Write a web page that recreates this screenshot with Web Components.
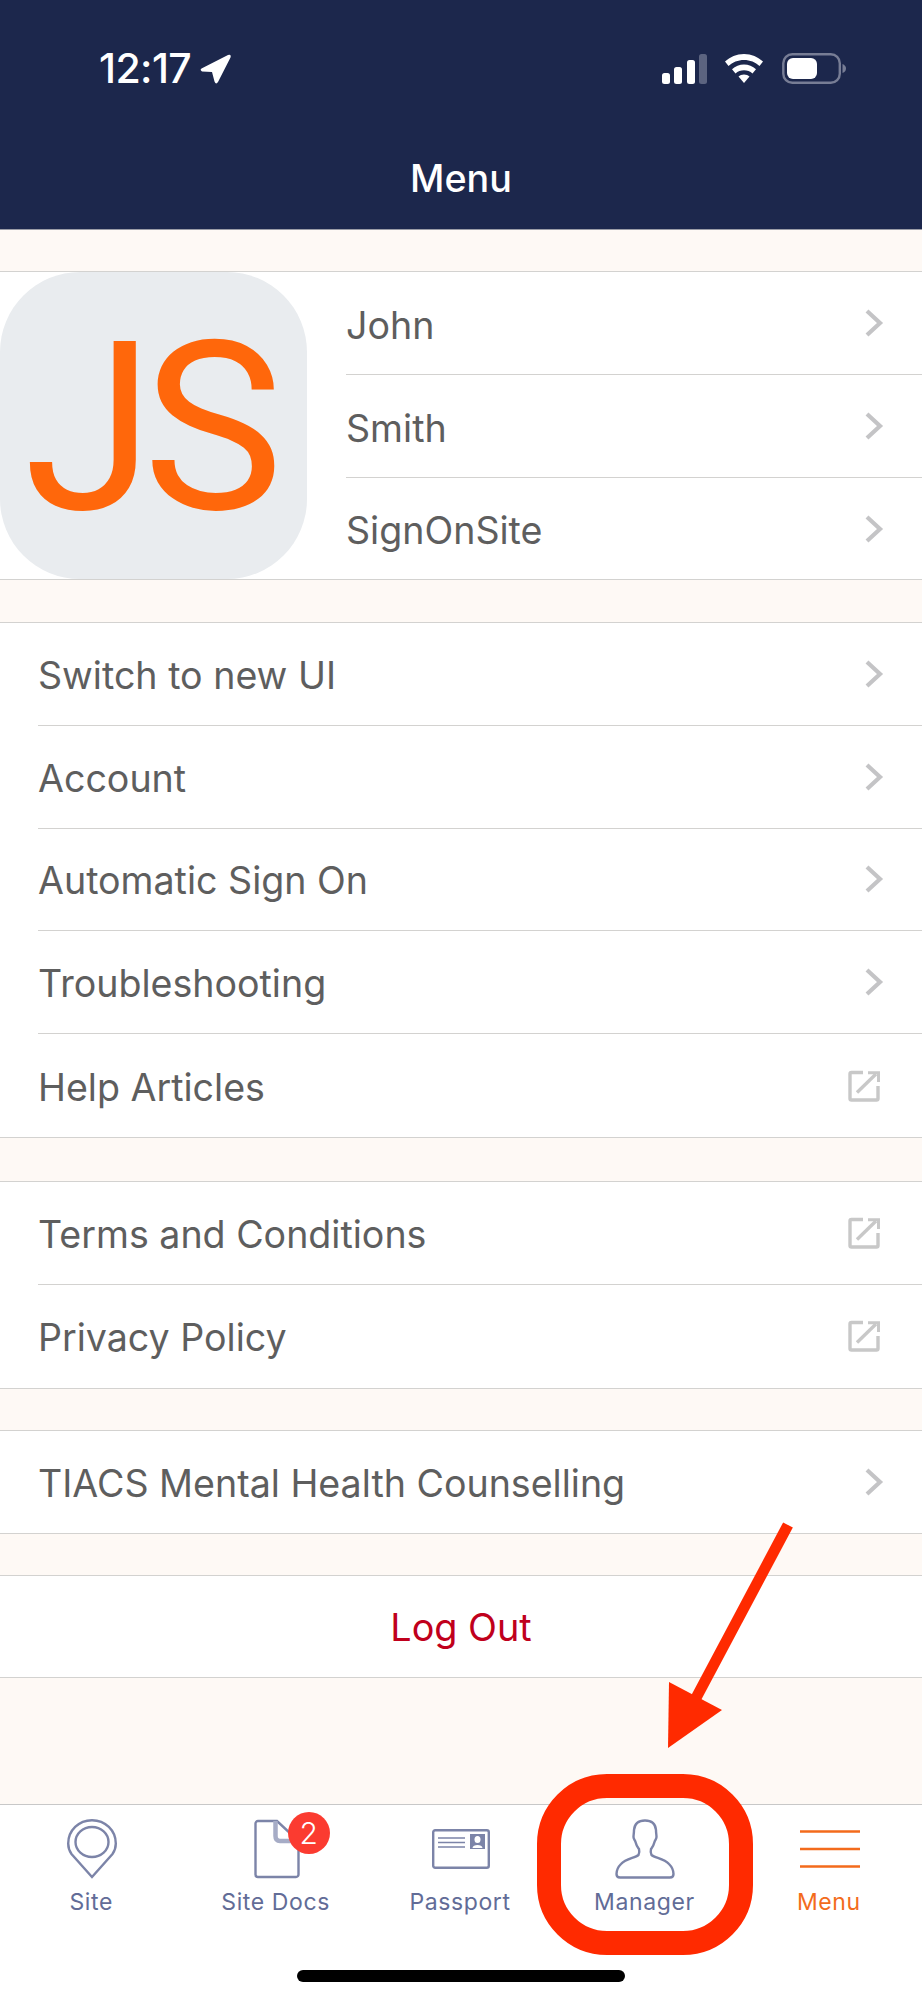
<!DOCTYPE html>
<html>
<head>
<meta charset="utf-8">
<style>
html, body { margin: 0; padding: 0; background: #fef9f5; }
body { font-family: Inter, "Liberation Sans", sans-serif; }
</style>
</head>
<body>
<app-screen>
  <status-header></status-header>
  <menu-group style="--gap: 41px">
    <profile-block></profile-block>
  </menu-group>
  <menu-group style="--gap: 42px">
    <menu-row>Switch to new UI</menu-row>
    <menu-row>Account</menu-row>
    <menu-row>Automatic Sign On</menu-row>
    <menu-row>Troubleshooting</menu-row>
    <menu-row external last>Help Articles</menu-row>
  </menu-group>
  <menu-group style="--gap: 43px">
    <menu-row external>Terms and Conditions</menu-row>
    <menu-row external last>Privacy Policy</menu-row>
  </menu-group>
  <menu-group>
    <menu-row last>TIACS Mental Health Counselling</menu-row>
  </menu-group>
  <menu-group>
    <logout-row>Log Out</logout-row>
  </menu-group>
  <tab-bar></tab-bar>
  <red-callout></red-callout>
</app-screen>

<script>
const CHEVRON = `<svg width="20" height="30" viewBox="0 0 20 30"><path d="M3 3 L16 15 L3 27" fill="none" stroke="#c4c4c6" stroke-width="4.200"/></svg>`;
const EXTERNAL = `<svg width="32" height="32" viewBox="0 0 32 32" fill="none" stroke="#c8c8c8" stroke-width="3.400"><path d="M15 2.500H3.500a1.500 1.500 0 0 0-1.500 1.500V28.500a1.500 1.500 0 0 0 1.500 1.500H28.500a1.500 1.500 0 0 0 1.500-1.500V16"/><path d="M9 22.500L28 4"/><path d="M20 2.800H30.500V12" stroke-width="3"/></svg>`;

class AppScreen extends HTMLElement {
    constructor() {
        super();
        this.attachShadow({mode: "open"}).innerHTML = `
        <style>
        :host { display: block; position: relative; width: 922px; height: 2000px; overflow: hidden; background: #fef9f5; }
        </style>
        <slot></slot>`;
    }
}

class StatusHeader extends HTMLElement {
    constructor() {
        super();
        this.attachShadow({mode: "open"}).innerHTML = `
        <style>
        :host { display: block; background: #1c274c; color: #fff; height: 229px; border-bottom: 1px solid #9a9ca6; box-sizing: content-box; }
        .status { display: flex; align-items: center; justify-content: space-between; padding: 53px 76px 0 99px; height: 31px; }
        .time { display: flex; align-items: center; gap: 9px; font-size: 41px; font-weight: 500; letter-spacing: -0.6px; line-height: 31px; }
        .right { display: flex; align-items: center; gap: 18px; }
        .title { text-align: center; font-size: 37.700px; font-weight: 500; line-height: 40px; margin-top: 74px; }
        svg { display: block; }
        </style>
        <div class="status">
            <div class="time">12:17
                <svg width="31" height="30" viewBox="0 0 31 30"><path d="M1.500 14.500 L28 1 Q31.500 0 30.500 3.500 L18 28 Q16 31 14.500 27.500 L12 18 L2 17.500 Q-0.500 16 1.500 14.500Z" fill="#fff"/></svg>
            </div>
            <div class="right">
                <svg width="45" height="30" viewBox="0 0 45 30">
                    <rect x="0" y="19" width="8" height="11" rx="2.500" fill="#fff"/>
                    <rect x="12" y="13" width="8" height="17" rx="2.500" fill="#fff"/>
                    <rect x="25" y="6" width="8" height="24" rx="2.500" fill="#fff"/>
                    <rect x="37" y="0" width="8" height="30" rx="2.500" fill="#5c6480"/>
                </svg>
                <svg width="38" height="29" viewBox="0 0 38 29" fill="#fff">
                    <path d="M19 0C11.500 0 5 3 0 7.500L3.500 12C7.500 8.300 13 6 19 6S30.500 8.300 34.500 12L38 7.500C33 3 26.500 0 19 0Z"/>
                    <path d="M19 10.500C14.500 10.500 10.300 12.300 7 15.300L10.500 19.500C12.800 17.500 15.800 16.300 19 16.300S25.200 17.500 27.500 19.500L31 15.300C27.700 12.300 23.500 10.500 19 10.500Z"/>
                    <path d="M19 20.500C16.800 20.500 14.900 21.300 13.500 22.600L19 29L24.500 22.600C23.100 21.300 21.200 20.500 19 20.500Z"/>
                </svg>
                <svg width="64" height="31" viewBox="0 0 64 31" style="margin-left:1px">
                    <rect x="1.300" y="1.300" width="56.500" height="28.400" rx="9" fill="none" stroke="#777d95" stroke-width="2.400"/>
                    <rect x="5" y="5" width="30" height="21" rx="6" fill="#fff"/>
                    <path d="M60.500 11 Q64 12.500 64 15.500 T60.500 20Z" fill="#777d95"/>
                </svg>
            </div>
        </div>
        <div class="title">Menu</div>`;
    }
}

class MenuGroup extends HTMLElement {
    constructor() {
        super();
        this.attachShadow({mode: "open"}).innerHTML = `
        <style>
        :host { display: block; margin-top: var(--gap, 41px); background: #fff; border-top: 1px solid #d3d2d0; border-bottom: 1px solid #d3d2d0; }
        </style>
        <slot></slot>`;
    }
}

class ProfileBlock extends HTMLElement {
    constructor() {
        super();
        this.attachShadow({mode: "open"}).innerHTML = `
        <style>
        :host { display: flex; height: 307px; }
        .avatar { flex: none; box-sizing: border-box; width: 307px; height: 307px; padding: 6px 11px 0 0; background: #e9ecef; border-radius: 80px; display: flex; align-items: center; justify-content: center;
            font-family: Roboto, sans-serif; font-size: 236px; letter-spacing: -11px; line-height: 1; color: #ff670b; }
        .rows { flex: 1; margin-left: 39px; display: flex; flex-direction: column; }
        .rows menu-row { flex: none; height: 103px; }
        .rows menu-row[last] { height: 101px; }
        </style>
        <div class="avatar">JS</div>
        <div class="rows">
            <menu-row flush>John</menu-row>
            <menu-row flush>Smith</menu-row>
            <menu-row flush last>SignOnSite</menu-row>
        </div>`;
    }
}

class MenuRow extends HTMLElement {
    constructor() {
        super();
        const icon = this.hasAttribute("external") ? EXTERNAL : CHEVRON;
        this.attachShadow({mode: "open"}).innerHTML = `
        <style>
        :host { display: block; padding-left: 38px; color: #5e5e5e; font-size: 37.600px; }
        :host([flush]) { padding-left: 0; }
        .inner { box-sizing: border-box; height: 100%; min-height: 101px; display: flex; align-items: center; justify-content: space-between; border-bottom: 1px solid #d3d2d0; padding-right: 38px; }
        :host(:not([flush])) .inner { min-height: 102.800px; }
        :host([last]) .inner { border-bottom: 0; }
        :host([external]) .inner { padding-right: 42px; }
        span { padding-top: 3px; }
        :host([flush]) span { padding-top: 4px; }
        svg { display: block; }
        </style>
        <div class="inner"><span><slot></slot></span>${icon}</div>`;
    }
}

class LogoutRow extends HTMLElement {
    constructor() {
        super();
        this.attachShadow({mode: "open"}).innerHTML = `
        <style>
        :host { display: flex; height: 101px; align-items: center; justify-content: center; color: #c0001c; font-size: 37.800px; }
        </style>
        <slot></slot>`;
    }
}

class TabItem extends HTMLElement {
    constructor() {
        super();
        this.attachShadow({mode: "open"}).innerHTML = `
        <style>
        :host { display: flex; flex-direction: column; align-items: center; color: #626c97; font-size: 23px; font-weight: 400; letter-spacing: 0.6px; }
        :host([active]) { color: #f36b1c; }
        .icon { position: relative; height: 60px; display: flex; align-items: center; justify-content: center; }
        .label { margin: 9px 2px 0 0; line-height: 28px; }
        </style>
        <div class="icon"><slot name="icon"></slot></div>
        <div class="label"><slot></slot></div>`;
    }
}

class TabBar extends HTMLElement {
    constructor() {
        super();
        this.attachShadow({mode: "open"}).innerHTML = `
        <style>
        :host { display: block; position: absolute; left: 0; right: 0; bottom: 0; height: 196px; box-sizing: border-box; background: #fff; border-top: 1px solid #c8c8c8; }
        .tabs { display: grid; grid-template-columns: repeat(5, 1fr); padding-top: 14px; }
        .home { position: absolute; left: 297px; width: 328px; height: 12px; top: 165px; border-radius: 6px; background: #000; }
        .badge { position: absolute; left: 34px; top: -7px; width: 42px; height: 42px; border-radius: 50%; background: #fb3b30; color: #fff; font-size: 30px; font-weight: 300; letter-spacing: 0; display: flex; align-items: center; justify-content: center; }
        .doc { position: relative; }
        svg { display: block; }
        </style>
        <div class="tabs">
            <tab-item>
                <svg slot="icon" width="50" height="60" viewBox="0 0 50 60" fill="none" stroke="#7c84a8" stroke-width="2.400">
                    <path d="M25 58L4.500 35C2 31.500 1.200 28 1.200 24.500C1.200 11.500 11.800 1.200 25 1.200S48.800 11.500 48.800 24.500C48.800 28 48 31.500 45.500 35Z"/>
                    <ellipse cx="25" cy="23" rx="16.500" ry="15"/>
                </svg>
                Site
            </tab-item>
            <tab-item>
                <div slot="icon" class="doc">
                    <svg width="46" height="60" viewBox="0 0 46 60" fill="none" stroke="#7c84a8" stroke-width="2.400">
                        <path d="M21 2H4a2.500 2.500 0 0 0-2.500 2.500V55.500A2.500 2.500 0 0 0 4 58H42a2.500 2.500 0 0 0 2.500-2.500V22L23 2Z"/>
                        <path d="M21.500 2V17C21.500 20 23 22 26 22H44" stroke-width="4.500" stroke="#a6acc6"/>
                    </svg>
                    <div class="badge">2</div>
                </div>
                Site Docs
            </tab-item>
            <tab-item>
                <svg slot="icon" width="58" height="40" viewBox="0 0 58 40" fill="none" stroke="#7c84a8" stroke-width="2.400">
                    <rect x="1.200" y="1.200" width="55.600" height="37.600" rx="2"/>
                    <path d="M6 9H33M6 13.500H33M6 18H33" stroke-width="1.600"/>
                    <rect x="38" y="5" width="15" height="15" fill="#7c84a8" stroke="none"/>
                    <ellipse cx="45.500" cy="10.500" rx="3" ry="3.600" fill="#fff" stroke="none"/>
                    <path d="M40.500 19c0-4 10-4 10 0Z" fill="#fff" stroke="none"/>
                </svg>
                Passport
            </tab-item>
            <tab-item>
                <svg slot="icon" width="60" height="60" viewBox="0 0 60 60" fill="none" stroke="#7c84a8" stroke-width="2.400">
                    <path d="M30 1.500C23 1.500 19.500 5 19 11C19 14 18.500 16 18.500 18C18.500 20 20 21 20.500 23C21.500 27 22.500 28 24 30C24.500 32 24.500 34 23.500 36C20 39 11 39.500 6 45C3 48 1.500 52 1.500 55C1.500 57.500 2.500 58.500 5 58.500H55C57.500 58.500 58.500 57.500 58.500 55C58.500 52 57 48 54 45C49 39.500 40 39 36.500 36C35.500 34 35.500 32 36 30C37.500 28 38.500 27 39.500 23C40 21 41.500 20 41.500 18C41.500 16 41 14 41 11C40.500 5 37 1.500 30 1.500Z"/>
                </svg>
                Manager
            </tab-item>
            <tab-item active>
                <svg slot="icon" width="60" height="38" viewBox="0 0 60 38" fill="none" stroke="#f36b1c" stroke-width="2.500">
                    <path d="M0 1.500H60M0 19H60M0 36.500H60"/>
                </svg>
                Menu
            </tab-item>
        </div>
        <div class="home"></div>`;
    }
}

// annotation drawn over the screenshot, arrow and box around Manager
class RedCallout extends HTMLElement {
    constructor() {
        super();
        this.attachShadow({mode: "open"}).innerHTML = `
        <style>
        :host { display: block; position: absolute; left: 0; top: 0; width: 922px; height: 2000px; pointer-events: none; }
        svg { display: block; }
        </style>
        <svg width="922" height="2000" viewBox="0 0 922 2000">
            <rect x="549" y="1786" width="192" height="157" rx="58" fill="none" stroke="#ff2a00" stroke-width="24"/>
            <path d="M788 1525L696 1698" stroke="#ff2a00" stroke-width="11" fill="none"/>
            <path d="M669 1682L722 1710L668 1748Z" fill="#ff2a00"/>
        </svg>`;
    }
}

customElements.define("app-screen", AppScreen);
customElements.define("status-header", StatusHeader);
customElements.define("menu-group", MenuGroup);
customElements.define("menu-row", MenuRow);
customElements.define("profile-block", ProfileBlock);
customElements.define("logout-row", LogoutRow);
customElements.define("tab-item", TabItem);
customElements.define("tab-bar", TabBar);
customElements.define("red-callout", RedCallout);
</script>
</body>
</html>
